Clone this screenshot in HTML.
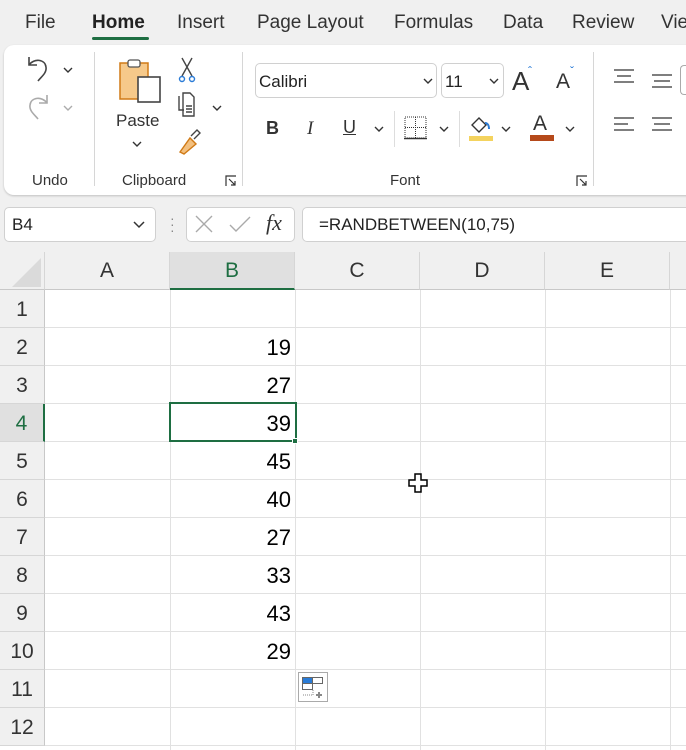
<!DOCTYPE html>
<html><head><meta charset="utf-8"><style>
*{margin:0;padding:0;box-sizing:border-box}
body{width:686px;height:750px;overflow:hidden;background:#f0f0f0;font-family:"Liberation Sans",sans-serif;color:#242424;position:relative}
.a{position:absolute}
.tab{position:absolute;top:12px;font-size:19px;color:#333}
.rib{position:absolute;left:4px;top:45px;width:700px;height:150px;background:#fff;border-radius:10px;box-shadow:0 1px 2px rgba(0,0,0,.2)}
.sep{position:absolute;top:52px;width:1px;height:134px;background:#d6d6d6}
.glab{position:absolute;top:172px;font-size:15px;color:#333}
.box{position:absolute;background:#fff;border:1px solid #d0d0d0;border-radius:5px}
.cv{position:absolute;width:10px;height:6px}
.ch{position:absolute;top:252px;height:38px;background:#f0f0f0;border-right:1px solid #d6d6d6;border-bottom:1px solid #c8c8c8;text-align:center;font-size:21px;line-height:38px;color:#333}
.rh{position:absolute;left:0;width:45px;height:38px;background:#f0f0f0;border-bottom:1px solid #d6d6d6;border-right:1px solid #c8c8c8;text-align:center;font-size:21px;line-height:40px;color:#333}
.v{position:absolute;left:170px;width:121px;text-align:right;font-size:22px;line-height:40px;color:#000}
</style></head><body>
<svg width="0" height="0" style="position:absolute"><defs><symbol id="c" viewBox="0 0 10 6"><path d="M1 1l4 4 4-4" fill="none" stroke="#333" stroke-width="1.4"/></symbol></defs></svg>
<div class="tab" style="left:25px">File</div>
<div class="tab" style="left:92px;font-weight:bold;color:#222">Home</div>
<div class="a" style="left:92px;top:37px;width:57px;height:3px;background:#1e6e42;border-radius:2px"></div>
<div class="tab" style="left:177px">Insert</div>
<div class="tab" style="left:257px">Page Layout</div>
<div class="tab" style="left:394px">Formulas</div>
<div class="tab" style="left:503px">Data</div>
<div class="tab" style="left:572px">Review</div>
<div class="tab" style="left:661px">View</div>

<div class="rib"></div>
<!-- undo -->
<svg class="a" style="left:26px;top:55px" width="24" height="70" viewBox="0 0 24 70" fill="none" stroke-width="1.6">
<path d="M3 2v8h8" stroke="#444"/><path d="M3 10C8 3 19 4 20 12c1 6-5 10-8 14" stroke="#444"/>
<path d="M21 40v8h-8" stroke="#aaa"/><path d="M21 48C16 41 5 42 4 50c-1 6 5 10 8 14" stroke="#aaa"/>
</svg>
<svg class="cv" style="left:63px;top:67px"><use href="#c"/></svg>
<svg class="cv" style="left:63px;top:105px;opacity:.4"><use href="#c"/></svg>
<div class="glab" style="left:32px">Undo</div>
<div class="sep" style="left:94px"></div>
<!-- clipboard -->
<svg class="a" style="left:118px;top:58px" width="44" height="46" viewBox="0 0 44 46">
<rect x="2" y="5" width="28" height="36" fill="#f6c98a" stroke="#d07a16" stroke-width="1.5"/>
<rect x="10" y="2" width="12" height="7" rx="2" fill="#fff" stroke="#555" stroke-width="1.3"/>
<rect x="20" y="19" width="22" height="25" fill="#fff" stroke="#444" stroke-width="1.6"/>
</svg>
<div class="a" style="left:116px;top:111px;font-size:17px;color:#333">Paste</div>
<svg class="cv" style="left:132px;top:141px"><use href="#c"/></svg>
<svg class="a" style="left:176px;top:56px" width="62" height="106" viewBox="0 0 62 106" fill="none" stroke="#444" stroke-width="1.4">
<path d="M6 2l10 18M16 2L6 20"/><circle cx="6" cy="23" r="2.5" stroke="#2a7bd6"/><circle cx="16" cy="23" r="2.5" stroke="#2a7bd6"/>
<path d="M3 40v14h5M7 37h7l4 4v19H7z"/><path d="M10 50h6M10 53h6M10 56h6"/>
<path d="M4 96l10-14 6 6-12 10z" fill="#f3c07f" stroke="#d07a16"/><path d="M15 80l6-6 3 3-6 6"/>
</svg>
<svg class="cv" style="left:212px;top:105px"><use href="#c"/></svg>
<div class="glab" style="left:122px">Clipboard</div>
<svg class="a" style="left:225px;top:175px" width="12" height="12" fill="none" stroke="#333" stroke-width="1.2"><path d="M1 11V1h10M4 4l6 6M6 10h4V6"/></svg>
<div class="sep" style="left:242px"></div>
<!-- font -->
<div class="box" style="left:255px;top:63px;width:182px;height:35px"></div>
<div class="a" style="left:259px;top:72px;font-size:17px;color:#222">Calibri</div>
<svg class="cv" style="left:423px;top:78px"><use href="#c"/></svg>
<div class="box" style="left:441px;top:63px;width:63px;height:35px"></div>
<div class="a" style="left:445px;top:72px;font-size:17px;color:#222">11</div>
<svg class="cv" style="left:489px;top:78px"><use href="#c"/></svg>
<div class="a" style="left:512px;top:66px;font-size:26px;color:#333">A</div>
<div class="a" style="left:528px;top:64px;font-size:12px;color:#2a7bd6">ˆ</div>
<div class="a" style="left:556px;top:70px;font-size:21px;color:#333">A</div>
<div class="a" style="left:570px;top:64px;font-size:12px;color:#2a7bd6">ˇ</div>
<div class="a" style="left:266px;top:118px;font-size:18px;font-weight:bold;color:#333">B</div>
<div class="a" style="left:307px;top:118px;font-size:19px;font-style:italic;font-family:'Liberation Serif',serif;color:#333">I</div>
<div class="a" style="left:343px;top:117px;font-size:18px;text-decoration:underline;color:#333">U</div>
<svg class="cv" style="left:374px;top:126px"><use href="#c"/></svg>
<div class="a" style="left:394px;top:111px;width:1px;height:36px;background:#ddd"></div>
<svg class="a" style="left:404px;top:116px" width="24" height="24" fill="none" stroke="#333" stroke-width="1" stroke-dasharray="1 1"><rect x="1" y="1" width="21" height="21"/><path d="M11.5 1v21M1 11.5h21"/><path d="M0 22.5h23" stroke-dasharray="0" stroke-width="1.5"/></svg>
<svg class="cv" style="left:439px;top:126px"><use href="#c"/></svg>
<div class="a" style="left:459px;top:111px;width:1px;height:36px;background:#ddd"></div>
<svg class="a" style="left:468px;top:115px" width="28" height="28" fill="none" stroke="#333" stroke-width="1.4"><path d="M4 10l7-7 7 7-7 7z"/><path d="M17 8c3 0 4 3 4 6" stroke="#2a7bd6" stroke-width="2"/><rect x="1" y="21" width="24" height="5" fill="#f4d35e" stroke="none"/></svg>
<svg class="cv" style="left:501px;top:126px"><use href="#c"/></svg>
<div class="a" style="left:533px;top:112px;font-size:21px;color:#333">A</div>
<div class="a" style="left:530px;top:135px;width:24px;height:6px;background:#b5491a"></div>
<svg class="cv" style="left:565px;top:126px"><use href="#c"/></svg>
<div class="glab" style="left:390px">Font</div>
<svg class="a" style="left:576px;top:175px" width="12" height="12" fill="none" stroke="#333" stroke-width="1.2"><path d="M1 11V1h10M4 4l6 6M6 10h4V6"/></svg>
<div class="sep" style="left:593px"></div>
<svg class="a" style="left:612px;top:66px" width="74" height="74" fill="none" stroke="#333" stroke-width="1.3">
<path d="M2 4h20M5 10h14M2 16h20"/><path d="M40 9h20M42 15h16M40 21h20"/>
<path d="M2 52h20M2 58h14M2 64h20"/><path d="M40 52h20M42 58h16M40 64h20"/>
</svg>
<div class="a" style="left:680px;top:65px;width:6px;height:30px;border:1px solid #aaa;border-right:none;border-radius:4px 0 0 4px"></div>

<!-- formula bar -->
<div class="box" style="left:4px;top:207px;width:152px;height:35px"></div>
<div class="a" style="left:12px;top:215px;font-size:17px;color:#222">B4</div>
<svg class="a" style="left:133px;top:221px" width="12" height="8"><path d="M1 1l5 5 5-5" fill="none" stroke="#333" stroke-width="1.5"/></svg>
<div class="a" style="left:170px;top:215px;font-size:14px;color:#888;line-height:6px">·<br>·<br>·</div>
<div class="box" style="left:186px;top:207px;width:109px;height:35px"></div>
<svg class="a" style="left:194px;top:214px" width="62" height="22" fill="none" stroke="#aaa" stroke-width="1.4"><path d="M2 2l16 16M18 2L2 18"/><path d="M36 11l6 6 14-14"/></svg>
<div class="a" style="left:266px;top:210px;font-size:22px;font-style:italic;font-family:'Liberation Serif',serif;color:#333">fx</div>
<div class="box" style="left:302px;top:207px;width:400px;height:35px"></div>
<div class="a" style="left:319px;top:215px;font-size:17px;color:#222">=RANDBETWEEN(10,75)</div>

<!-- grid -->
<div class="a" style="left:0;top:252px;width:686px;height:498px;background:#fff"></div>
<svg class="a" style="left:0;top:252px" width="686" height="498">
<g stroke="#e1e1e1" stroke-width="1">
<path d="M170.5 0V498M295.5 0V498M420.5 0V498M545.5 0V498M670.5 0V498"/>
<path d="M0 75.5H686M0 113.5H686M0 151.5H686M0 189.5H686M0 227.5H686M0 265.5H686M0 303.5H686M0 341.5H686M0 379.5H686M0 417.5H686M0 455.5H686M0 493.5H686"/>
</g></svg>
<div class="ch" style="left:0;width:45px"></div>
<svg class="a" style="left:12px;top:258px" width="30" height="30"><path d="M29 0V29H0z" fill="#dadada"/></svg>
<div class="ch" style="left:45px;width:125px">A</div>
<div class="ch" style="left:170px;width:125px;background:#e0e0e0;color:#1e6e42;border-bottom:2px solid #1e6e42">B</div>
<div class="ch" style="left:295px;width:125px">C</div>
<div class="ch" style="left:420px;width:125px">D</div>
<div class="ch" style="left:545px;width:125px">E</div>
<div class="ch" style="left:670px;width:30px"></div>

<div class="rh" style="top:290px">1</div>
<div class="rh" style="top:328px">2</div>
<div class="rh" style="top:366px">3</div>
<div class="rh" style="top:404px;background:#e0e0e0;color:#1e6e42;border-right:2px solid #1e6e42">4</div>
<div class="rh" style="top:442px">5</div>
<div class="rh" style="top:480px">6</div>
<div class="rh" style="top:518px">7</div>
<div class="rh" style="top:556px">8</div>
<div class="rh" style="top:594px">9</div>
<div class="rh" style="top:632px">10</div>
<div class="rh" style="top:670px">11</div>
<div class="rh" style="top:708px">12</div>

<div class="v" style="top:328px">19</div>
<div class="v" style="top:366px">27</div>
<div class="v" style="top:404px">39</div>
<div class="v" style="top:442px">45</div>
<div class="v" style="top:480px">40</div>
<div class="v" style="top:518px">27</div>
<div class="v" style="top:556px">33</div>
<div class="v" style="top:594px">43</div>
<div class="v" style="top:632px">29</div>

<div class="a" style="left:169px;top:402px;width:128px;height:40px;border:2px solid #1e6e42"></div>
<div class="a" style="left:292px;top:438px;width:6px;height:6px;background:#1e6e42;border:1px solid #fff"></div>

<svg class="a" style="left:408px;top:473px" width="22" height="22"><path d="M7 1h6v6h6v6h-6v6H7v-6H1V7h6z" fill="#fff" stroke="#000" stroke-width="1.5"/></svg>

<div class="a" style="left:298px;top:672px;width:30px;height:30px;border:1px solid #aaa;background:#fff"></div>
<svg class="a" style="left:301px;top:675px" width="26" height="26"><rect x="1.5" y="2.5" width="10" height="6" fill="#2a7bd6" stroke="#666"/><rect x="11.5" y="2.5" width="10" height="6" fill="#fff" stroke="#666"/><rect x="1.5" y="8.5" width="10" height="6" fill="#fff" stroke="#666"/><path d="M2 20h10M12 15v5" stroke="#888" stroke-dasharray="1 1"/><path d="M15 20h6M18 17v6" stroke="#888" stroke-width="2"/></svg>
</body></html>
